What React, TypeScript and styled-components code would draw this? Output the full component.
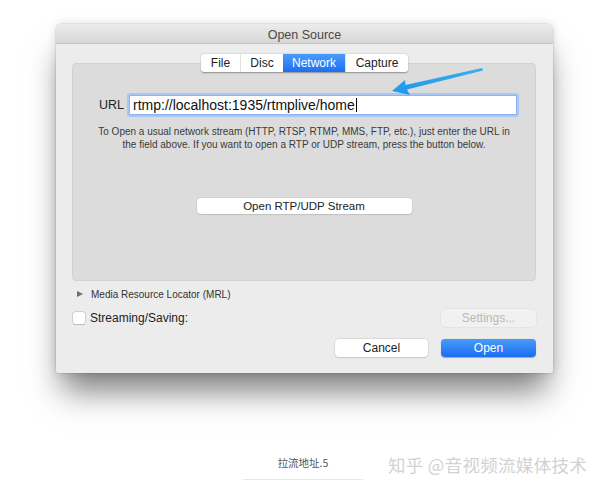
import React from "react";
import styled, { createGlobalStyle } from "styled-components";

const Global = createGlobalStyle`
  html, body { margin: 0; padding: 0; background: #ffffff; }
  body { font-family: "Liberation Sans", Arial, sans-serif; }
  * { box-sizing: border-box; }
`;

const Page = styled.div`
  position: relative;
  width: 600px;
  height: 494px;
  overflow: hidden;
  display: flex;
  flex-direction: column;
  background: #fff;
`;

const Window = styled.div`
  margin: 24px 0 0 56px;
  width: 497px;
  height: 349px;
  background: #ececec;
  border-radius: 5px 5px 2px 2px;
  box-shadow: 0 24px 30px -6px rgba(0, 0, 0, 0.5), 0 0 10px rgba(0, 0, 0, 0.12), 0 0 0 0.5px rgba(0, 0, 0, 0.12);
  display: flex;
  flex-direction: column;
`;

const TitleBar = styled.div`
  height: 20px;
  padding-top: 3px;
  border-radius: 5px 5px 0 0;
  background: linear-gradient(#ececec, #d6d6d6);
  border-bottom: 1px solid #c4c4c4;
  display: flex;
  align-items: center;
  justify-content: center;
  font-size: 12.5px;
  color: #4a4a4a;
`;

const Body = styled.div`
  padding: 10px 17px 0 16px;
  display: flex;
  flex-direction: column;
`;

const Tabs = styled.div`
  align-self: center;
  margin-left: 1px;
  display: flex;
  height: 18px;
  margin-bottom: -9px;
  position: relative;
  z-index: 1;
  background: #fff;
  border-radius: 3px;
  box-shadow: 0 0.5px 1.5px rgba(0, 0, 0, 0.35);
`;

const Tab = styled.div<{ $active?: boolean; $w: number }>`
  width: ${(p) => p.$w}px;
  display: flex;
  align-items: center;
  justify-content: center;
  font-size: 12px;
  color: ${(p) => (p.$active ? "#fff" : "#222")};
  background: ${(p) => (p.$active ? "linear-gradient(#4b9cf9, #1c6ff3)" : "transparent")};
  border-left: ${(p) => (p.$active ? "none" : "1px solid #e2e2e2")};
  &:first-child { border-left: none; }
`;

const Panel = styled.div`
  height: 218px;
  background: #dcdcdc;
  border-radius: 4px;
  border: 1px solid #d2d2d2;
  display: flex;
  flex-direction: column;
  padding: 31px 18px 0 26px;
`;

const UrlRow = styled.div`
  display: flex;
  align-items: center;
  gap: 5px;
`;

const Label = styled.span`
  font-size: 12.5px;
  color: #222;
`;

const UrlInput = styled.div`
  flex: 1;
  height: 20px;
  background: #fff;
  border: 1px solid #8eb3ee;
  box-shadow: 0 0 0 2px #a9c7f3;
  border-radius: 1px;
  display: flex;
  align-items: center;
  padding-left: 3px;
  font-size: 14px;
  color: #111;
`;

const Caret = styled.span`
  display: inline-block;
  width: 1px;
  height: 14px;
  background: #000;
  margin-left: 1px;
`;

const Help = styled.p`
  margin: 10px 0 0 -8px;
  text-align: center;
  font-size: 10px;
  line-height: 13px;
  color: #3a3a3a;
`;

const Button = styled.div<{ $w: number; $primary?: boolean; $disabled?: boolean }>`
  width: ${(p) => p.$w}px;
  height: 18px;
  border-radius: 4px;
  display: flex;
  align-items: center;
  justify-content: center;
  font-size: 12px;
  color: ${(p) => (p.$primary ? "#fff" : p.$disabled ? "#b9b9b9" : "#222")};
  background: ${(p) =>
    p.$primary ? "linear-gradient(#4a9bf8, #1a6df2)" : p.$disabled ? "#f1f1f1" : "#fff"};
  box-shadow: ${(p) =>
    p.$disabled
      ? "0 0 0 0.5px #dcdcdc"
      : p.$primary
      ? "0 0.5px 1px rgba(0,0,0,0.3)"
      : "0 0 0 0.5px #c6c6c6, 0 1px 1px rgba(0,0,0,0.15)"};
`;

const StreamButton = styled(Button)`
  align-self: center;
  margin: 47px 0 0 -8px;
  height: 16px;
  font-size: 11.5px;
`;

const Row = styled.div`
  display: flex;
  align-items: center;
`;

const MrlRow = styled(Row)`
  margin-top: 6px;
  padding-left: 5px;
  gap: 8px;
  height: 14px;
`;

const Triangle = styled.span`
  width: 0;
  height: 0;
  border-top: 3.5px solid transparent;
  border-bottom: 3.5px solid transparent;
  border-left: 6px solid #6e6e6e;
`;

const SmallText = styled.span`
  font-size: 10px;
  color: #333;
`;

const StreamRow = styled(Row)`
  margin-top: 8px;
  height: 18px;
  justify-content: space-between;
  padding-left: 1px;
`;

const CheckWrap = styled(Row)`
  gap: 5px;
`;

const Checkbox = styled.span`
  width: 12px;
  height: 12px;
  background: #fff;
  border-radius: 2.5px;
  box-shadow: 0 0 0 0.5px #b9b9b9, 0 0.5px 1px rgba(0,0,0,0.2);
`;

const StreamText = styled.span`
  font-size: 12px;
  color: #222;
`;

const ActionRow = styled(Row)`
  margin-top: 12px;
  justify-content: flex-end;
  gap: 13px;
`;

const Footer = styled.div`
  margin-top: 82px;
  display: flex;
  align-items: flex-start;
`;

const CaptionBlock = styled.div`
  margin-left: 243px;
  width: 120px;
  display: flex;
  flex-direction: column;
  align-items: center;
`;

const Caption = styled.span`
  font-family: "Noto Sans CJK SC", sans-serif;
  font-size: 10.5px;
  color: #555;
  height: 18px;
`;

const Rule = styled.div`
  margin-top: 6px;
  width: 120px;
  height: 1px;
  background: #e8e8e8;
`;

const Watermark = styled.span`
  margin: -3px 0 0 25px;
  font-family: "Noto Sans CJK SC", sans-serif;
  font-size: 17.5px;
  color: #d2d2d2;
  letter-spacing: 0.3px;
  white-space: nowrap;
`;

const Arrow = styled.svg`
  position: absolute;
  left: 385px;
  top: 62px;
`;

export default function App() {
  return (
    <>
      <Global />
      <Page>
        <Window>
          <TitleBar>Open Source</TitleBar>
          <Body>
            <Tabs>
              <Tab $w={39}>File</Tab>
              <Tab $w={43}>Disc</Tab>
              <Tab $w={62} $active>Network</Tab>
              <Tab $w={63}>Capture</Tab>
            </Tabs>
            <Panel>
              <UrlRow>
                <Label>URL</Label>
                <UrlInput>
                  rtmp://localhost:1935/rtmplive/home<Caret />
                </UrlInput>
              </UrlRow>
              <Help>
                To Open a usual network stream (HTTP, RTSP, RTMP, MMS, FTP, etc.), just enter the URL in
                <br />
                the field above. If you want to open a RTP or UDP stream, press the button below.
              </Help>
              <StreamButton $w={215}>Open RTP/UDP Stream</StreamButton>
            </Panel>
            <MrlRow>
              <Triangle />
              <SmallText>Media Resource Locator (MRL)</SmallText>
            </MrlRow>
            <StreamRow>
              <CheckWrap>
                <Checkbox />
                <StreamText>Streaming/Saving:</StreamText>
              </CheckWrap>
              <Button $w={95} $disabled>Settings...</Button>
            </StreamRow>
            <ActionRow>
              <Button $w={93}>Cancel</Button>
              <Button $w={95} $primary>Open</Button>
            </ActionRow>
          </Body>
        </Window>
        <Footer>
          <CaptionBlock>
            <Caption>拉流地址.5</Caption>
            <Rule />
          </CaptionBlock>
          <Watermark>知乎 @音视频流媒体技术</Watermark>
        </Footer>
        <Arrow width="104" height="36" viewBox="0 0 104 36">
          <defs>
            <linearGradient id="ag" x1="0" y1="1" x2="1" y2="0">
              <stop offset="0" stopColor="#1f97ea" />
              <stop offset="1" stopColor="#3aaef0" />
            </linearGradient>
          </defs>
          <polygon
            points="7,29 20,18 20.5,23 97,6 98,8.5 22,27.5 25,33"
            fill="url(#ag)"
          />
        </Arrow>
      </Page>
    </>
  );
}
